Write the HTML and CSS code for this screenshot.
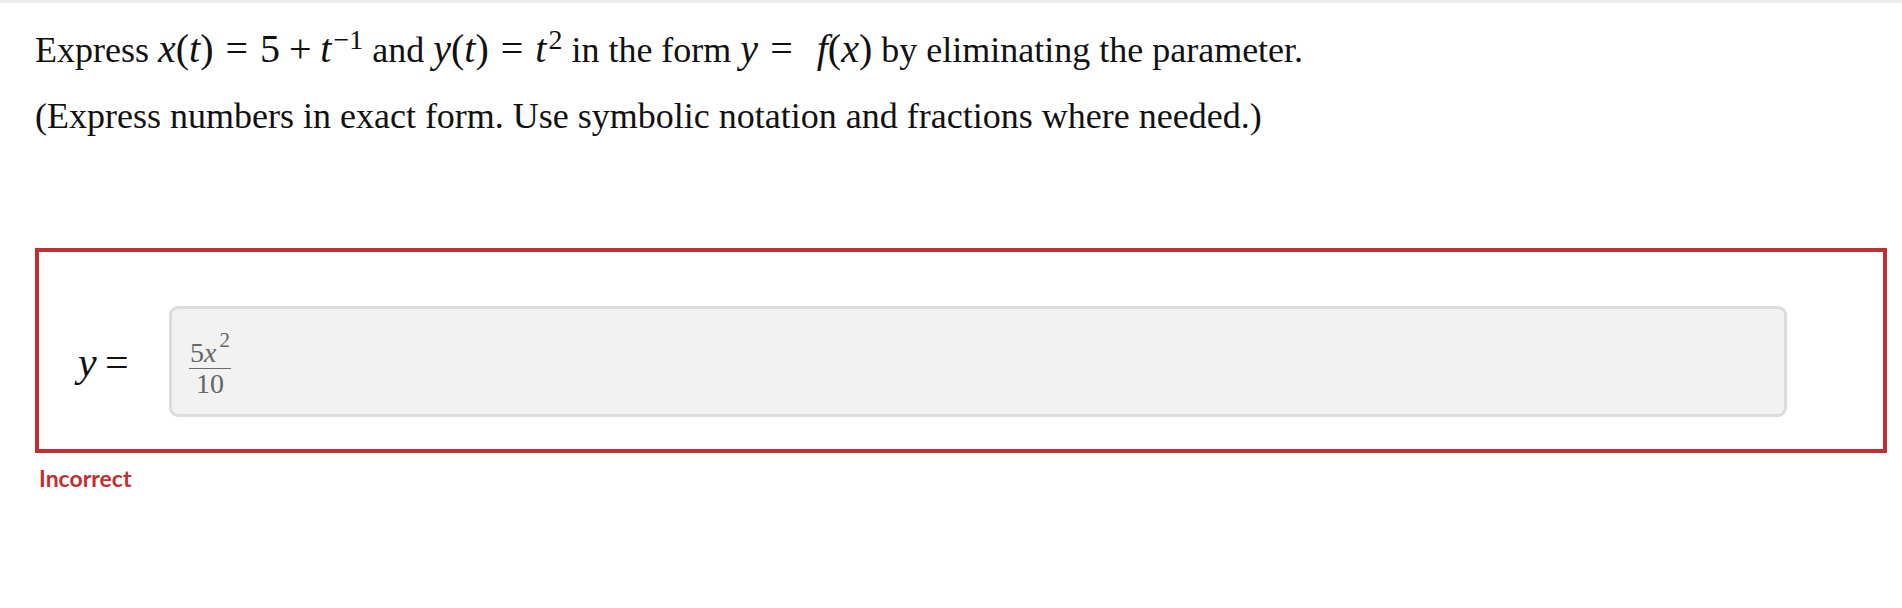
FILE: index.html
```html
<!DOCTYPE html>
<html lang="en">
<head>
<meta charset="utf-8">
<title>Eliminate the parameter</title>
<link rel="stylesheet" href="styles.css">
</head>
<body>
<div class="page">
  <p class="q">Express <span class="m"><i>x</i>(<i>t</i>)<span class="rel">=</span>5<span class="bin">+</span><i>t</i><sup>−1</sup></span> and <span class="m"><i>y</i>(<i>t</i>)<span class="rel">=</span><i>t</i><sup>2</sup></span> in the form <span class="m"><i>y</i><span class="rel">=</span><i class="f">f</i>(<i>x</i>)</span> by eliminating the parameter.</p>
  <p class="q note">(Express numbers in exact form. Use symbolic notation and fractions where needed.)</p>
  <div class="answer">
    <span class="lhs"><i>y</i><span class="eq">=</span></span>
    <div class="input">
      <span class="frac">
        <span class="num">5<i>x</i><sup class="fs">2</sup></span>
        <span class="bar"></span>
        <span class="den">10</span>
      </span>
    </div>
  </div>
  <div class="feedback">Incorrect</div>
</div>
</body>
</html>
```
FILE: styles.css
```css
html, body {
  margin: 0;
  padding: 0;
  background: #ffffff;
}
body {
  border-top: 3px solid #ececec;
  font-family: "Liberation Serif", "Times New Roman", serif;
  color: #111111;
}
.page {
  padding: 27px 15px 0 35px;
}
.q {
  margin: 0;
  font-size: 36px;
  line-height: 40px;
  white-space: nowrap;
}
.note {
  margin-top: 26px;
}
.m {
  font-size: 40px;
  line-height: 36px;
}
.m i {
  font-style: italic;
}
.rel {
  margin: 0 0.3em;
}
.bin {
  margin: 0 0.22em;
}
.q sup {
  font-size: 28px;
  line-height: 0;
  vertical-align: 13px;
  margin-left: 2px;
}
.f {
  margin-left: 0.3em;
}
.answer {
  margin-top: 112px;
  border: 4px solid #c13030;
  display: flex;
  align-items: center;
  padding: 54px 96px 32px 39px;
}
.lhs {
  font-size: 42px;
  line-height: 40px;
  width: 91px;
  flex: none;
}
.lhs i {
  font-style: italic;
}
.eq {
  margin-left: 0.2em;
}
.input {
  flex: 1;
  height: 105px;
  box-sizing: content-box;
  border: 3px solid #dcdcdc;
  border-radius: 9px;
  background: #f2f2f2;
  display: flex;
  align-items: flex-start;
  padding: 0 0 0 17px;
}
.frac {
  margin-top: 31px;
  display: inline-flex;
  flex-direction: column;
  align-items: center;
  font-size: 28px;
  line-height: 26px;
  color: #666666;
}
.num {
  display: block;
  padding: 0 1px;
}
.num i {
  font-style: italic;
}
.fs {
  font-size: 21px;
  line-height: 0;
  vertical-align: 15px;
  margin-left: 3px;
}
.bar {
  display: block;
  align-self: stretch;
  height: 0;
  border-top: 1.5px solid #6a6a6a;
  margin: 2px 0 2px;
}
.den {
  display: block;
}
.feedback {
  margin-top: 12px;
  padding-left: 4px;
  font-family: Lato, "Open Sans", sans-serif;
  font-weight: 700;
  font-size: 23px;
  line-height: 26px;
  color: #c13030;
}
```
